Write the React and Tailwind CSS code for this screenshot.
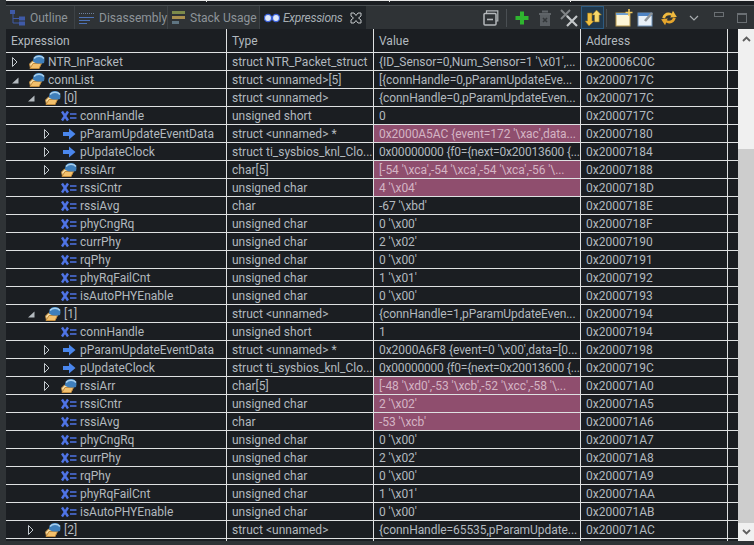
import React from "react";

const StructIcon = () => (
  <svg width="16" height="16" viewBox="0 0 16 16" className="shrink-0">
    <path d="M0.5 10 L3.5 7 H12.5 L10 14.5 H1.5 Z" fill="#fbe0a6" stroke="#b5843f" />
    <path d="M1 14.5 H10 L12.5 9.5 H4 Z" fill="#f3c06c" stroke="#c08a3c" />
    <path d="M4 7.5 C4 2.5 6.5 1 10 1 C13.5 1 15.5 3 15.5 6.5 L15 9 C12 10 7 10 4 7.5 Z" fill="#3f7fbb" />
    <path d="M5 4.5 C7 1.5 13 1.5 15 4.5" stroke="#a9d0ee" strokeWidth="1.6" fill="none" />
  </svg>
);
const VarIcon = () => (
  <svg width="16" height="16" viewBox="0 0 16 16" className="shrink-0">
    <path d="M1 3.5 L7 12.5 M7 3.5 L1 12.5" stroke="#4f74e6" strokeWidth="2.4" fill="none" />
    <path d="M9 6 H15.5 M9 10 H15.5" stroke="#4f74e6" strokeWidth="1.6" fill="none" />
  </svg>
);
const PtrIcon = () => (
  <svg width="16" height="16" viewBox="0 0 16 16" className="shrink-0">
    <path d="M2 6 H8 V2.5 L14.5 8 L8 13.5 V10 H2 Z" fill="#4a86ec" />
  </svg>
);
const Twisty = ({ kind }) => (
  <svg width="10" height="12" viewBox="0 0 10 12" className="shrink-0">
    {kind === "closed" && <path d="M1.5 1.5 L6 6 L1.5 10.5 Z" fill="none" stroke="#c4cacf" />}
    {kind === "open" && <path d="M1 9.5 H7.5 V3.5 Z" fill="#b4babf" />}
  </svg>
);

const uc = "unsigned char";
const un = "struct <unnamed>";

const rows = [
  [0, "closed", "s", "NTR_InPacket", "struct NTR_Packet_struct", "{ID_Sensor=0,Num_Sensor=1 '\\x01',...", "0x20006C0C"],
  [0, "open", "s", "connList", "struct <unnamed>[5]", "[{connHandle=0,pParamUpdateEve...", "0x2000717C"],
  [1, "open", "s", "[0]", un, "{connHandle=0,pParamUpdateEven...", "0x2000717C"],
  [2, "", "v", "connHandle", "unsigned short", "0", "0x2000717C"],
  [2, "closed", "p", "pParamUpdateEventData", "struct <unnamed> *", "0x2000A5AC {event=172 '\\xac',data...", "0x20007180", 1],
  [2, "closed", "p", "pUpdateClock", "struct ti_sysbios_knl_Clo...", "0x00000000 {f0={next=0x20013600 {...", "0x20007184"],
  [2, "closed", "s", "rssiArr", "char[5]", "[-54 '\\xca',-54 '\\xca',-54 '\\xca',-56 '\\...", "0x20007188", 1],
  [2, "", "v", "rssiCntr", uc, "4 '\\x04'", "0x2000718D", 1],
  [2, "", "v", "rssiAvg", "char", "-67 '\\xbd'", "0x2000718E"],
  [2, "", "v", "phyCngRq", uc, "0 '\\x00'", "0x2000718F"],
  [2, "", "v", "currPhy", uc, "2 '\\x02'", "0x20007190"],
  [2, "", "v", "rqPhy", uc, "0 '\\x00'", "0x20007191"],
  [2, "", "v", "phyRqFailCnt", uc, "1 '\\x01'", "0x20007192"],
  [2, "", "v", "isAutoPHYEnable", uc, "0 '\\x00'", "0x20007193"],
  [1, "open", "s", "[1]", un, "{connHandle=1,pParamUpdateEven...", "0x20007194"],
  [2, "", "v", "connHandle", "unsigned short", "1", "0x20007194"],
  [2, "closed", "p", "pParamUpdateEventData", "struct <unnamed> *", "0x2000A6F8 {event=0 '\\x00',data=[0...", "0x20007198"],
  [2, "closed", "p", "pUpdateClock", "struct ti_sysbios_knl_Clo...", "0x00000000 {f0={next=0x20013600 {...", "0x2000719C"],
  [2, "closed", "s", "rssiArr", "char[5]", "[-48 '\\xd0',-53 '\\xcb',-52 '\\xcc',-58 '\\...", "0x200071A0", 1],
  [2, "", "v", "rssiCntr", uc, "2 '\\x02'", "0x200071A5", 1],
  [2, "", "v", "rssiAvg", "char", "-53 '\\xcb'", "0x200071A6", 1],
  [2, "", "v", "phyCngRq", uc, "0 '\\x00'", "0x200071A7"],
  [2, "", "v", "currPhy", uc, "2 '\\x02'", "0x200071A8"],
  [2, "", "v", "rqPhy", uc, "0 '\\x00'", "0x200071A9"],
  [2, "", "v", "phyRqFailCnt", uc, "1 '\\x01'", "0x200071AA"],
  [2, "", "v", "isAutoPHYEnable", uc, "0 '\\x00'", "0x200071AB"],
  [1, "closed", "s", "[2]", un, "{connHandle=65535,pParamUpdate...", "0x200071AC"],
];

const indent = ["pl-[5px]", "pl-[21px]", "pl-[37px]"];
const Cell = ({ w, className = "", children }) => (
  <div className={`${w} shrink-0 h-full border-r border-[#dfe1e2] flex items-center overflow-hidden whitespace-nowrap ${className}`}>
    {children}
  </div>
);

const Row = ({ r }) => {
  const [d, tw, ic, name, type, value, addr, hi] = r;
  const tight = value.startsWith("0x00000000") ? "tracking-[-0.2px]" : "tracking-[-0.06px]";
  return (
    <div className="flex h-[18px] border-b border-[#dfe1e2] shrink-0">
      <Cell w="w-[221px]" className={indent[d]}>
        <Twisty kind={tw} />
        <span className="w-[8px] shrink-0" />
        {ic === "s" ? <StructIcon /> : ic === "v" ? <VarIcon /> : <PtrIcon />}
        <span className="ml-[3px]">{name}</span>
      </Cell>
      <Cell w="w-[147px]" className="pl-[5px]">{type}</Cell>
      <Cell w="w-[207px]" className={hi ? `pl-[5px] ${tight} bg-[#8f4e6e] text-[#d4b4c4]` : `pl-[5px] ${tight}`}>{value}</Cell>
      <Cell w="w-[147px]" className="pl-[5px]">{addr}</Cell>
    </div>
  );
};

const TabIconOutline = () => (
  <svg width="18" height="16" viewBox="0 0 18 16" className="shrink-0">
    <rect x="1" y="0" width="5" height="4" fill="#3f5aa8" />
    <path d="M4 4 V13 H10 M4 8.5 H10" stroke="#3f5aa8" fill="none" />
    <rect x="10" y="6.5" width="6" height="4" fill="#3f5aa8" />
    <rect x="10" y="11.5" width="6" height="4" fill="#3f5aa8" />
  </svg>
);
const TabIconDis = () => (
  <svg width="18" height="16" viewBox="0 0 18 16" className="shrink-0">
    <path d="M1 3.5 H6 M7 3.5 H10 M11 3.5 H14 M15 3.5 H17" stroke="#6d7f9c" strokeDasharray="1 1" fill="none" />
    <path d="M1 7.5 H16 M1 10.5 H12 M1 13.5 H9" stroke="#4e73b8" fill="none" />
  </svg>
);
const TabIconStack = () => (
  <svg width="16" height="16" viewBox="0 0 16 16" className="shrink-0">
    <rect x="1" y="1" width="13" height="3" fill="#7c8a4a" />
    <rect x="1" y="6" width="13" height="3" fill="#a98f4e" />
    <rect x="1" y="11" width="7" height="3" fill="#5f7582" />
  </svg>
);
const TabIconExpr = () => (
  <svg width="16" height="10" viewBox="0 0 16 10" className="shrink-0">
    <circle cx="4" cy="5" r="3.6" fill="#dfe8fa" stroke="#3c62d8" strokeWidth="1.4" />
    <circle cx="12" cy="5" r="3.6" fill="#dfe8fa" stroke="#3c62d8" strokeWidth="1.4" />
  </svg>
);

const Sep = () => <div className="w-px h-[18px] bg-[#4a4f53] shrink-0" />;

const Toolbar = () => (
  <div className="absolute right-0 top-0 h-full flex items-center">
    <div className="w-[22px] mr-[4px] h-full flex items-center justify-center">
      <svg width="16" height="16" viewBox="0 0 16 16">
        <path d="M3.5 3 V0.8 H14.8 V11 H13" stroke="#b4b8bb" fill="none" strokeWidth="1.2" />
        <rect x="1" y="3.5" width="12" height="11.5" rx="1" stroke="#b4b8bb" strokeWidth="1.5" fill="none" />
        <path d="M4 9.5 H10" stroke="#b4b8bb" strokeWidth="1.6" />
      </svg>
    </div>
    <Sep />
    <div className="w-[2px]" />
    <div className="w-[25px] h-full flex items-center justify-center">
      <svg width="14" height="14" viewBox="0 0 14 14"><path d="M7 0.5 V13.5 M0.5 7 H13.5" stroke="#2fb52f" strokeWidth="4" /></svg>
    </div>
    <div className="w-[22px] h-full flex items-center justify-center">
      <svg width="14" height="16" viewBox="0 0 14 16">
        <rect x="1" y="3" width="12" height="2" fill="#5f6468" />
        <rect x="4" y="0.5" width="6" height="2" fill="#5f6468" />
        <rect x="2" y="5" width="10" height="11" fill="#5a5f63" />
        <path d="M5 8 L9 12 M9 8 L5 12" stroke="#33373a" strokeWidth="1.6" />
      </svg>
    </div>
    <div className="w-[25px] h-full flex items-center justify-center">
      <svg width="18" height="18" viewBox="0 0 18 18">
        <path d="M1 1 L9 9" stroke="#808487" strokeWidth="2" />
        <path d="M10 1 L1 10" stroke="#808487" strokeWidth="2" />
        <path d="M7 7 L17 17 M17 7 L7 17" stroke="#c4c8ca" strokeWidth="2.2" />
      </svg>
    </div>
    <div className="w-[23px] h-[23px] border border-[#2d5a80] bg-[#20394e] flex items-center justify-center shrink-0">
      <svg width="18" height="18" viewBox="0 0 18 18">
        <path d="M5 17 L1 12 H3.5 V4 H8 V12 H10 Z" fill="#f0c040" stroke="#8a6a20" strokeWidth="0.6" />
        <path d="M12.5 1 L17.5 6 H15.2 V13 H10.5 V6 H8 Z" fill="#f5d76a" stroke="#8a6a20" strokeWidth="0.6" />
      </svg>
    </div>
    <div className="w-[2px]" />
    <Sep />
    <div className="w-[5px]" />
    <div className="w-[23px] h-full flex items-center justify-center">
      <svg width="18" height="18" viewBox="0 0 18 18">
        <rect x="1" y="4" width="14" height="13" fill="#fdf6d8" stroke="#b89a50" />
        <rect x="1" y="4" width="14" height="2" fill="#6ea0d4" />
        <path d="M14 0 V7 M10.5 3.5 H17.5" stroke="#f3c95c" strokeWidth="1.6" />
      </svg>
    </div>
    <div className="w-[21px] h-full flex items-center justify-center">
      <svg width="18" height="18" viewBox="0 0 18 18">
        <rect x="1" y="4" width="14" height="13" fill="#e8f0f8" stroke="#6e92b8" />
        <rect x="1" y="4" width="14" height="3" fill="#4f84c4" />
        <path d="M8 12 L15 4" stroke="#8e9499" strokeWidth="2.6" />
      </svg>
    </div>
    <div className="w-[25px] h-full flex items-center justify-center">
      <svg width="18" height="18" viewBox="0 0 16 16">
        <path d="M2 8 C3 3.5 7 2 10.5 4 L11.5 1.5 L15 7 L9 7.5 L10 6 C7.5 5 5 6 4.5 8.5 Z" fill="#efb93e" />
        <path d="M14 8 C13 12.5 9 14 5.5 12 L4.5 14.5 L1 9 L7 8.5 L6 10 C8.5 11 11 10 11.5 7.5 Z" fill="#e5a52c" />
      </svg>
    </div>
    <div className="w-[26px] h-full flex items-center justify-center">
      <svg width="10" height="6" viewBox="0 0 10 6"><path d="M1 1 L5 5 L9 1" stroke="#a9adb0" strokeWidth="1.2" fill="none" /></svg>
    </div>
    <div className="w-[23px] h-full flex items-start justify-center pt-[6px]">
      <div className="w-[10px] h-[5px] border border-[#6a6f73]" />
    </div>
    <div className="w-[24px] h-full flex items-center justify-center">
      <div className="w-[10px] h-[10px] border border-[#6a6f73] border-t-2" />
    </div>
  </div>
);

const Tab = ({ icon, label, w, gap }) => (
  <div className={`${w} h-full flex items-center ${gap} pl-[3px] border-r border-[#3d4246] shrink-0`}>
    {icon}
    <span className="text-[#8d9499]">{label}</span>
  </div>
);

export default function App() {
  return (
    <div className="relative w-[754px] h-[545px] bg-[#2f3336] overflow-hidden text-[12px] leading-none text-[#b2b9bf] flex flex-col" style={{ fontFamily: 'Roboto, sans-serif' }}>
      <div className="relative h-[6px] shrink-0 border-b border-[#4a4f52] bg-[#1b1e22] ml-[6px] border-t border-t-[#e6e6e6]">
        <div className="absolute left-[200px] top-0 w-px h-[1px] bg-[#e6e6e6]" />
        <div className="absolute left-[383px] top-0 w-px h-[1px] bg-[#e6e6e6]" />
        <div className="absolute left-[564px] top-0 w-px h-[1px] bg-[#e6e6e6]" />
      </div>
      <div className="relative h-[23px] shrink-0 flex pl-[6px]">
        <Tab w="w-[69px]" gap="gap-[3px]" icon={<TabIconOutline />} label="Outline" />
        <Tab w="w-[93px]" gap="gap-[3px]" icon={<TabIconDis />} label="Disassembly" />
        <Tab w="w-[92px]" gap="gap-[3px]" icon={<TabIconStack />} label="Stack Usage" />
        <div className="w-[106px] h-full flex items-center pl-[4px] gap-[3px] bg-[#1f2327] shrink-0">
          <TabIconExpr />
          <span className="italic text-[#a6adb3] tracking-[-0.3px]">Expressions</span>
          <svg width="12" height="12" viewBox="0 0 12 12" className="ml-[4px] shrink-0">
            <path d="M1 1 H4 L6 3.5 L8 1 H11 V4 L8.5 6 L11 8 V11 H8 L6 8.5 L4 11 H1 V8 L3.5 6 L1 4 Z" fill="none" stroke="#c4c8ca" />
          </svg>
        </div>
        <Toolbar />
      </div>
      <div className="flex h-[512px] ml-[6px] shrink-0">
        <div className="w-[732px] h-full bg-[#1b1e22] flex flex-col shrink-0 overflow-hidden">
          <div className="flex h-[24px] border-b border-[#dfe1e2] shrink-0">
            <Cell w="w-[221px]" className="pl-[5px]">Expression</Cell>
            <Cell w="w-[147px]" className="pl-[5px]">Type</Cell>
            <Cell w="w-[207px]" className="pl-[5px]">Value</Cell>
            <Cell w="w-[147px]" className="pl-[5px]">Address</Cell>
          </div>
          {rows.map((r, i) => <Row key={i} r={r} />)}
          <div className="flex flex-1">
            <div className="w-[221px] border-r border-[#dfe1e2] shrink-0" />
            <div className="w-[147px] border-r border-[#dfe1e2] shrink-0" />
            <div className="w-[207px] border-r border-[#dfe1e2] shrink-0" />
            <div className="w-[147px] border-r border-[#dfe1e2] shrink-0" />
          </div>
        </div>
        <div className="w-[16px] h-full flex flex-col bg-[#f0f0f0] shrink-0">
          <div className="h-[120px] flex justify-center pt-[7px] shrink-0">
            <svg width="9" height="6" viewBox="0 0 9 6"><path d="M1 5 L4.5 1.5 L8 5" stroke="#5f5f5f" strokeWidth="1.8" fill="none" /></svg>
          </div>
          <div className="h-[374px] bg-[#cdcdcd] shrink-0" />
          <div className="flex-1 flex justify-center pt-[6px]">
            <svg width="9" height="6" viewBox="0 0 9 6"><path d="M1 1 L4.5 4.5 L8 1" stroke="#5f5f5f" strokeWidth="1.8" fill="none" /></svg>
          </div>
        </div>
      </div>
      <div className="flex-1" />
    </div>
  );
}
